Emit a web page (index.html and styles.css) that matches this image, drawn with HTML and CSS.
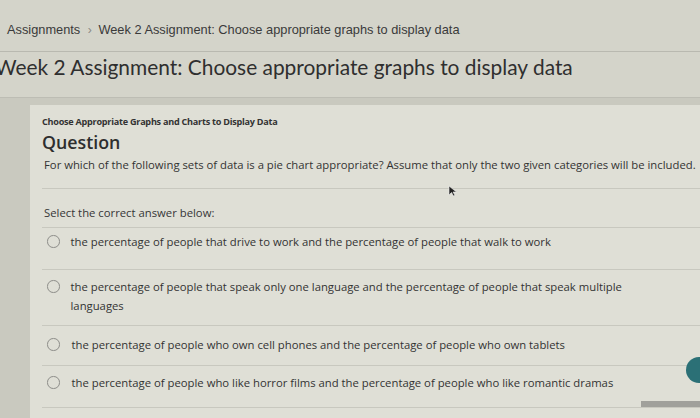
FILE: index.html
```html
<!DOCTYPE html>
<html>
<head>
<meta charset="utf-8">
<link rel="stylesheet" href="styles.css">
</head>
<body>
<div class="page">
  <div class="crumbs">
    <span class="crumb">Assignments</span>
    <span class="sep">›</span>
    <span class="crumb">Week 2 Assignment: Choose appropriate graphs to display data</span>
  </div>
  <h1 class="title">Week 2 Assignment: Choose appropriate graphs to display data</h1>
  <div class="main">
    <div class="card">
      <div class="head">
        <div class="topic">Choose Appropriate Graphs and Charts to Display Data</div>
        <div class="qlabel">Question</div>
        <div class="qtext">For which of the following sets of data is a pie chart appropriate? Assume that only the two given categories will be included.</div>
      </div>
      <div class="select">Select the correct answer below:</div>
      <div class="opt o1"><span class="radio"></span><span class="otext">the percentage of people that drive to work and the percentage of people that walk to work</span></div>
      <div class="opt o2"><span class="radio"></span><span class="otext">the percentage of people that speak only one language and the percentage of people that speak multiple<br>languages</span></div>
      <div class="opt o3"><span class="radio"></span><span class="otext">the percentage of people who own cell phones and the percentage of people who own tablets</span></div>
      <div class="opt o4"><span class="radio"></span><span class="otext">the percentage of people who like horror films and the percentage of people who like romantic dramas</span></div>
    </div>
  </div>
  <div class="fab"></div>
  <div class="scrollbar"></div>
  <div class="cursor">
    <svg width="10" height="12" viewBox="0 0 10 12"><path d="M1 1 L1 10 L3.5 7.5 L5.5 11 L7 10.3 L5 7 L8.5 7 Z" fill="#222" stroke="#eee" stroke-width="0.6"/></svg>
  </div>
</div>
</body>
</html>
```
FILE: styles.css
```css
html, body {
  margin: 0;
  padding: 0;
}
body {
  width: 700px;
  height: 418px;
  overflow: hidden;
  background: #d4d4ca;
  color: #363636;
}
.page {
  position: relative;
  width: 700px;
  height: 418px;
  overflow: hidden;
}
.crumbs {
  height: 52px;
  box-sizing: border-box;
  padding: 22px 0 0 7px;
  font-family: "Liberation Sans", Arial, sans-serif;
  font-size: 12.8px;
  color: #3a3a3a;
  border-bottom: 1px solid #b9b9b0;
  white-space: nowrap;
}
.sep {
  color: #8a8a85;
  margin: 0 3px 0 4px;
  font-size: 12px;
}
.title {
  margin: 0;
  height: 46px;
  box-sizing: border-box;
  padding: 1px 0 0 0;
  margin-left: -5px;
  font-family: Lato, sans-serif;
  font-weight: 400;
  font-size: 20.9px;
  line-height: 28px;
  color: #2f2f2f;
  white-space: nowrap;
  border-bottom: 1px solid #bdbdb4;
}
.main {
  background: #c9c9bf;
  padding: 7px 0 0 30px;
  height: 330px;
}
.card {
  background: #dfdfd6;
  height: 100%;
  padding-left: 12px;
  font-family: "Open Sans", sans-serif;
}
.head {
  padding-top: 11px;
  height: 72px;
  border-bottom: 1px solid #c8c8bf;
}
.topic {
  font-weight: 700;
  font-size: 9.1px;
  line-height: 11px;
  letter-spacing: -0.25px;
  color: #333;
}
.qlabel {
  font-weight: 600;
  font-size: 17.8px;
  line-height: 24px;
  color: #2e2e2e;
  margin-top: 3px;
}
.qtext {
  font-size: 11.3px;
  line-height: 15px;
  margin-top: 3px;
  padding-left: 2px;
  white-space: nowrap;
  color: #333;
}
.select {
  height: 39px;
  box-sizing: border-box;
  padding: 16px 0 0 2px;
  font-size: 11.3px;
  line-height: 15px;
  border-bottom: 1px solid #c8c8bf;
}
.opt {
  display: flex;
  align-items: flex-start;
  gap: 11px;
  padding-left: 5px;
  border-bottom: 1px solid #c8c8bf;
  box-sizing: border-box;
  font-size: 11.3px;
  line-height: 15px;
  color: #333;
}
.o1 { height: 42px; padding-top: 6px; }
.o2 { height: 56px; padding-top: 7px; line-height: 19px; }
.o2 .radio { margin-top: 3px; }
.o3 { height: 40px; padding-top: 11px; }
.o4 { height: 42px; padding-top: 9px; }
.o3 .otext, .o4 .otext { margin-left: 1px; }
.radio {
  flex: none;
  width: 10.5px;
  height: 10.5px;
  border: 1.5px solid #8e8e8a;
  border-radius: 50%;
  margin-top: 1px;
}
.otext {
  white-space: nowrap;
}
.fab {
  position: absolute;
  left: 686px;
  top: 357px;
  width: 26px;
  height: 26px;
  border-radius: 50%;
  background: #2b7076;
}
.scrollbar {
  position: absolute;
  left: 641px;
  top: 401px;
  width: 60px;
  height: 6px;
  background: #a0a09b;
}
.cursor {
  position: absolute;
  left: 448px;
  top: 183px;
}
```
